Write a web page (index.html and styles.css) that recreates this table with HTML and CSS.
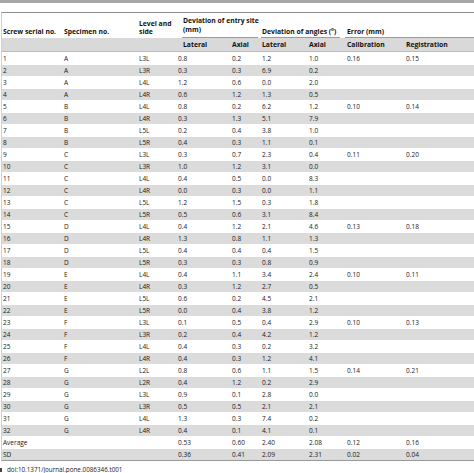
FILE: index.html
```html
<!DOCTYPE html>
<html>
<head>
<meta charset="utf-8">
<link rel="stylesheet" href="styles.css">
</head>
<body>
<div class="topbar"></div>
<table class="data">
  <colgroup>
    <col class="c1"><col class="c2"><col class="c3"><col class="c4"><col class="c5"><col class="c6"><col class="c7"><col class="c8"><col class="c9">
  </colgroup>
  <thead>
    <tr class="h1">
      <th class="p1">Screw serial no.</th>
      <th>Specimen no.</th>
      <th>Level and<br>side</th>
      <th colspan="2" class="grp"><div class="ul ul-entry">Deviation of entry site<br>(mm)</div></th>
      <th colspan="2" class="grp"><div class="ul ul-angle">Deviation of angles (°)</div></th>
      <th colspan="2" class="grp"><div class="ul ul-err">Error (mm)</div></th>
    </tr>
    <tr class="h2">
      <th></th><th></th><th></th>
      <th class="lat">Lateral</th><th>Axial</th><th>Lateral</th><th>Axial</th><th>Calibration</th><th>Registration</th>
    </tr>
  </thead>
  <tbody>
    <tr><td class="p1">1</td><td>A</td><td>L3L</td><td>0.8</td><td>0.2</td><td>1.2</td><td>1.0</td><td>0.16</td><td>0.15</td></tr>
    <tr class="alt"><td class="p1">2</td><td>A</td><td>L3R</td><td>0.3</td><td>0.3</td><td>6.9</td><td>0.2</td><td></td><td></td></tr>
    <tr><td class="p1">3</td><td>A</td><td>L4L</td><td>1.2</td><td>0.6</td><td>0.0</td><td>2.0</td><td></td><td></td></tr>
    <tr class="alt"><td class="p1">4</td><td>A</td><td>L4R</td><td>0.6</td><td>1.2</td><td>1.3</td><td>0.5</td><td></td><td></td></tr>
    <tr><td class="p1">5</td><td>B</td><td>L4L</td><td>0.8</td><td>0.2</td><td>6.2</td><td>1.2</td><td>0.10</td><td>0.14</td></tr>
    <tr class="alt"><td class="p1">6</td><td>B</td><td>L4R</td><td>0.3</td><td>1.3</td><td>5.1</td><td>7.9</td><td></td><td></td></tr>
    <tr><td class="p1">7</td><td>B</td><td>L5L</td><td>0.2</td><td>0.4</td><td>3.8</td><td>1.0</td><td></td><td></td></tr>
    <tr class="alt"><td class="p1">8</td><td>B</td><td>L5R</td><td>0.4</td><td>0.3</td><td>1.1</td><td>0.1</td><td></td><td></td></tr>
    <tr><td class="p1">9</td><td>C</td><td>L3L</td><td>0.3</td><td>0.7</td><td>2.3</td><td>0.4</td><td>0.11</td><td>0.20</td></tr>
    <tr class="alt"><td class="p1">10</td><td>C</td><td>L3R</td><td>1.0</td><td>1.2</td><td>3.1</td><td>0.0</td><td></td><td></td></tr>
    <tr><td class="p1">11</td><td>C</td><td>L4L</td><td>0.4</td><td>0.5</td><td>0.0</td><td>8.3</td><td></td><td></td></tr>
    <tr class="alt"><td class="p1">12</td><td>C</td><td>L4R</td><td>0.0</td><td>0.3</td><td>0.0</td><td>1.1</td><td></td><td></td></tr>
    <tr><td class="p1">13</td><td>C</td><td>L5L</td><td>1.2</td><td>1.5</td><td>0.3</td><td>1.8</td><td></td><td></td></tr>
    <tr class="alt"><td class="p1">14</td><td>C</td><td>L5R</td><td>0.5</td><td>0.6</td><td>3.1</td><td>8.4</td><td></td><td></td></tr>
    <tr><td class="p1">15</td><td>D</td><td>L4L</td><td>0.4</td><td>1.2</td><td>2.1</td><td>4.6</td><td>0.13</td><td>0.18</td></tr>
    <tr class="alt"><td class="p1">16</td><td>D</td><td>L4R</td><td>1.3</td><td>0.8</td><td>1.1</td><td>1.3</td><td></td><td></td></tr>
    <tr><td class="p1">17</td><td>D</td><td>L5L</td><td>0.4</td><td>0.4</td><td>0.4</td><td>1.5</td><td></td><td></td></tr>
    <tr class="alt"><td class="p1">18</td><td>D</td><td>L5R</td><td>0.3</td><td>0.3</td><td>0.8</td><td>0.9</td><td></td><td></td></tr>
    <tr><td class="p1">19</td><td>E</td><td>L4L</td><td>0.4</td><td>1.1</td><td>3.4</td><td>2.4</td><td>0.10</td><td>0.11</td></tr>
    <tr class="alt"><td class="p1">20</td><td>E</td><td>L4R</td><td>0.3</td><td>1.2</td><td>2.7</td><td>0.5</td><td></td><td></td></tr>
    <tr><td class="p1">21</td><td>E</td><td>L5L</td><td>0.6</td><td>0.2</td><td>4.5</td><td>2.1</td><td></td><td></td></tr>
    <tr class="alt"><td class="p1">22</td><td>E</td><td>L5R</td><td>0.0</td><td>0.4</td><td>3.8</td><td>1.2</td><td></td><td></td></tr>
    <tr><td class="p1">23</td><td>F</td><td>L3L</td><td>0.1</td><td>0.5</td><td>0.4</td><td>2.9</td><td>0.10</td><td>0.13</td></tr>
    <tr class="alt"><td class="p1">24</td><td>F</td><td>L3R</td><td>0.2</td><td>0.4</td><td>4.2</td><td>1.2</td><td></td><td></td></tr>
    <tr><td class="p1">25</td><td>F</td><td>L4L</td><td>0.4</td><td>0.3</td><td>0.2</td><td>3.2</td><td></td><td></td></tr>
    <tr class="alt"><td class="p1">26</td><td>F</td><td>L4R</td><td>0.4</td><td>0.3</td><td>1.2</td><td>4.1</td><td></td><td></td></tr>
    <tr><td class="p1">27</td><td>G</td><td>L2L</td><td>0.8</td><td>0.6</td><td>1.1</td><td>1.5</td><td>0.14</td><td>0.21</td></tr>
    <tr class="alt"><td class="p1">28</td><td>G</td><td>L2R</td><td>0.4</td><td>1.2</td><td>0.2</td><td>2.9</td><td></td><td></td></tr>
    <tr><td class="p1">29</td><td>G</td><td>L3L</td><td>0.9</td><td>0.1</td><td>2.8</td><td>0.0</td><td></td><td></td></tr>
    <tr class="alt"><td class="p1">30</td><td>G</td><td>L3R</td><td>0.5</td><td>0.5</td><td>2.1</td><td>2.1</td><td></td><td></td></tr>
    <tr><td class="p1">31</td><td>G</td><td>L4L</td><td>1.3</td><td>0.3</td><td>7.4</td><td>0.2</td><td></td><td></td></tr>
    <tr class="alt"><td class="p1">32</td><td>G</td><td>L4R</td><td>0.4</td><td>0.1</td><td>4.1</td><td>0.1</td><td></td><td></td></tr>
    <tr><td class="p1">Average</td><td></td><td></td><td>0.53</td><td>0.60</td><td>2.40</td><td>2.08</td><td>0.12</td><td>0.16</td></tr>
    <tr class="alt"><td class="p1">SD</td><td></td><td></td><td>0.36</td><td>0.41</td><td>2.09</td><td>2.31</td><td>0.02</td><td>0.04</td></tr>
  </tbody>
</table>
<div class="doi"><span class="mark"></span>doi:10.1371/journal.pone.0086346.t001</div>
</body>
</html>
```

FILE: styles.css
```css
html, body {
  margin: 0;
  padding: 0;
  background: #ffffff;
}

body {
  width: 474px;
  height: 473px;
  font-family: "Open Sans", "Noto Sans", sans-serif;
  color: #1a1a1a;
  overflow: hidden;
}

.topbar {
  height: 3px;
  background: #a8a8a8;
}

.data {
  margin: 9px 0 0 1px;
  width: 473px;
  table-layout: fixed;
  border-collapse: separate;
  border-spacing: 0;
  border-top: 1px solid #8e8e8e;
  border-left: 1px solid #d0d0d0;
  border-bottom: 1px solid #9a9a9a;
}

.c1 { width: 60px; }
.c2 { width: 75px; }
.c3 { width: 39px; }
.c4 { width: 54px; }
.c5 { width: 30px; }
.c6 { width: 47px; }
.c7 { width: 38px; }
.c8 { width: 59px; }
.c9 { width: 70px; }

th {
  font-weight: 700;
  font-size: 6.8px;
  color: #111111;
  text-align: left;
  padding: 0 0 0 2px;
  white-space: nowrap;
}

.h1 th {
  height: 24px;
  vertical-align: bottom;
  line-height: 8.7px;
  padding-bottom: 1px;
}

.h1 th.grp {
  padding: 0;
}

.ul {
  border-bottom: 1px solid #9a9a9a;
  padding-left: 1px;
}

.ul-entry {
  margin: 0 2px 0 6px;
  padding-bottom: 2.3px;
}

.ul-angle {
  margin: 0 5px 0 1px;
  padding-bottom: 0.8px;
}

.ul-err {
  margin: 0;
  padding-left: 2px;
  padding-bottom: 0.8px;
}

.h2 th {
  height: 13px;
  line-height: 13px;
  background: #d9d9d9;
  border-bottom: 1px solid #bdbdbd;
  padding-top: 0;
  padding-bottom: 0;
  vertical-align: middle;
}

.h2 th.lat {
  padding-left: 7px;
}

td {
  font-size: 6.5px;
  line-height: 11px;
  height: 11px;
  padding: 0 0 0 2px;
  border-top: 1px solid transparent;
  background-clip: padding-box;
  white-space: nowrap;
  vertical-align: middle;
}

th.p1, td.p1 {
  padding-left: 1px;
}

tr.alt td {
  background-color: #dbdbdb;
}

.doi {
  position: relative;
  margin-top: 6px;
  padding-left: 7px;
  font-size: 6.3px;
  line-height: 6px;
  height: 6px;
  color: #222222;
  white-space: nowrap;
}

.mark {
  position: absolute;
  left: 0;
  top: 1px;
  width: 2px;
  height: 4px;
  background: #444444;
}
```
